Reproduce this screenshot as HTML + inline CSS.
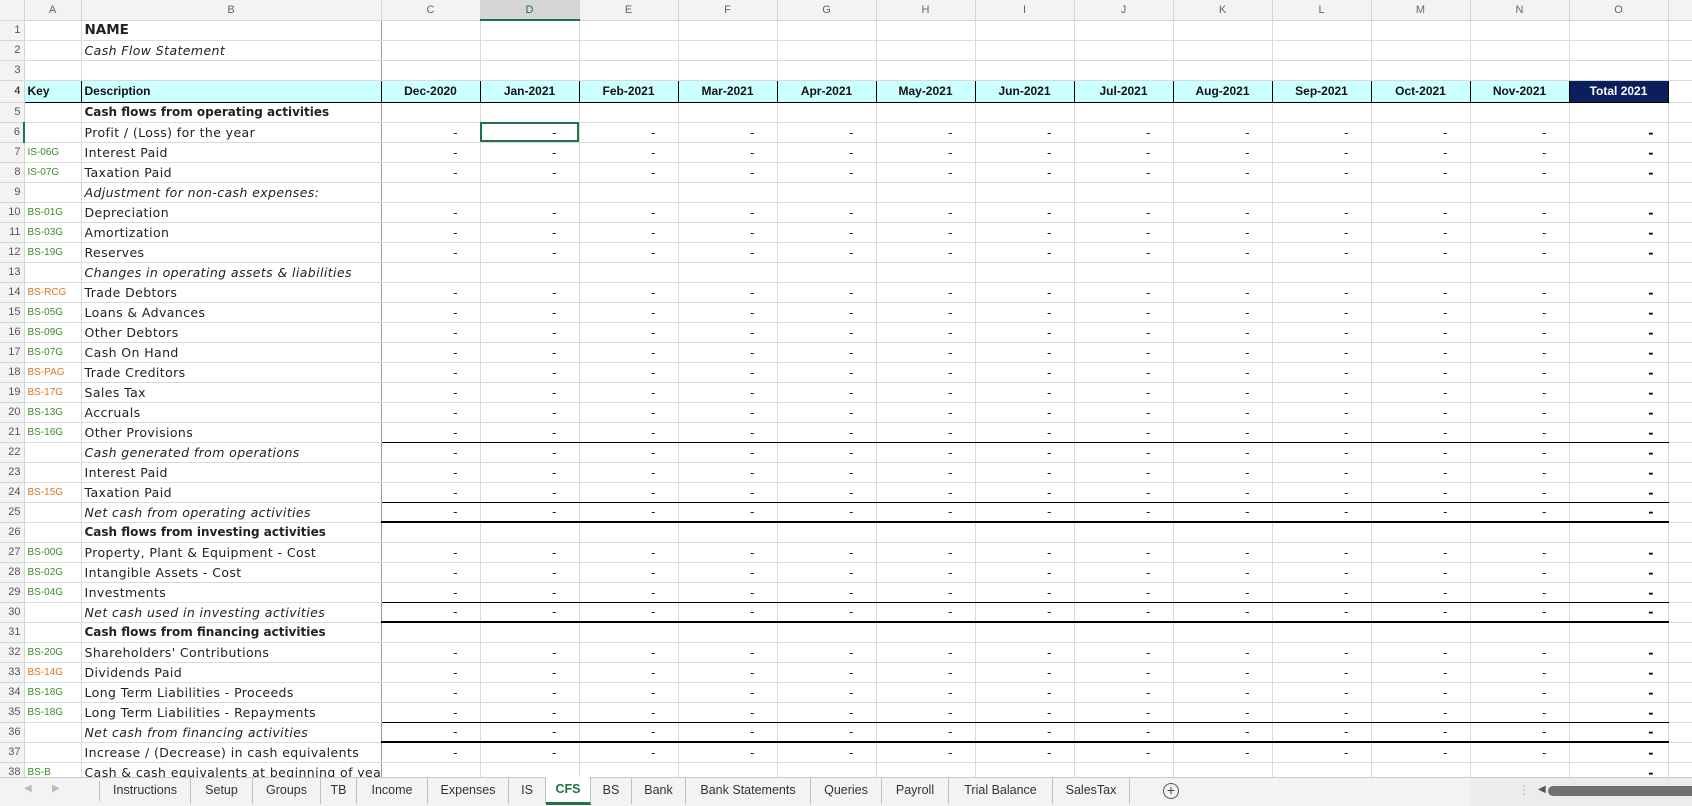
<!DOCTYPE html>
<html><head><meta charset="utf-8"><style>
*{margin:0;padding:0;box-sizing:border-box}
body{width:1692px;height:806px;overflow:hidden;background:#fff;font-family:"DejaVu Sans","Liberation Sans",sans-serif;font-size:12.5px;color:#222;position:relative}
table{border-collapse:collapse;table-layout:fixed;position:absolute;left:0;top:0;width:1698px}
td{height:20px;border-right:1px solid #dadada;border-bottom:1px solid #dadada;white-space:nowrap;overflow:hidden;padding:0 3px;vertical-align:middle}
tr.ch td{background:#f3f3f3;color:#666;text-align:center;font-size:11px;font-family:"Liberation Sans",sans-serif;border-color:#d4d4d4}
td.rn{background:#f3f3f3;color:#555;text-align:right;padding:0 3px 0 0;font-size:11px;border-color:#d4d4d4;font-family:"Liberation Sans",sans-serif}
td.fz{border-right:1px solid #9a9a9a;letter-spacing:0.4px}
td.fz.b{letter-spacing:0;font-size:12px}
tr.hd td{background:#ccffff;font-weight:bold;font-family:"Liberation Sans",sans-serif;font-size:12px;color:#111;border-top:1px solid #000;border-bottom:1px solid #000;border-right:1px solid #000;text-align:center;height:22px;letter-spacing:0}
tr.hd td.rn{background:#f3f3f3;border-top:1px solid #d4d4d4;border-bottom:1px solid #d4d4d4;border-right:1px solid #d4d4d4;font-weight:normal;text-align:right;font-size:11px}
tr.hd td.l{text-align:left}
tr.hd td.tot{background:#0b1f5c;color:#fff}
tr.hd td.p{background:#fff;border-top:1px solid #dadada;border-bottom:1px solid #dadada;border-right:1px solid #dadada}
td.k{font-size:10px;color:#3b8a2a;font-family:"Liberation Sans",sans-serif}
td.o{color:#e0741f}
.b{font-weight:bold}
.i{font-style:italic}
tr.d td.v{text-align:right;padding-right:22px}
tr.d td.t{text-align:right;padding-right:14px;font-weight:bold;color:#000}
tr.bt td.v,tr.bt td.t{border-bottom:1px solid #000}
tr.bk td.v,tr.bk td.t{border-bottom:2px solid #000}
td.sel{outline:2px solid #217346;outline-offset:-2px;position:relative}
.tabs{position:absolute;left:0;top:777px;width:1692px;height:29px;background:#f3f3f3;border-top:1px solid #c8c8c8;font-family:"Liberation Sans",sans-serif;font-size:12.5px;color:#333}
.tab{position:absolute;top:0;height:26px;line-height:24px;text-align:center;border-right:1px solid #c0c0c0}
.tab.act{background:#fff;color:#217346;font-weight:bold;border-bottom:3px solid #217346;top:-1px;height:28px}
</style></head><body>
<table>
<colgroup><col style="width:24px"><col style="width:57px"><col style="width:300px"><col style="width:99px"><col style="width:99px"><col style="width:99px"><col style="width:99px"><col style="width:99px"><col style="width:99px"><col style="width:99px"><col style="width:99px"><col style="width:99px"><col style="width:99px"><col style="width:99px"><col style="width:99px"><col style="width:99px"><col style="width:30px"></colgroup>
<tr class="ch"><td style="background:#f3f3f3"></td><td>A</td><td class="fz" style="letter-spacing:0">B</td><td>C</td><td style="background:#d6d6d6;color:#217346;border-bottom:2px solid #217346">D</td><td>E</td><td>F</td><td>G</td><td>H</td><td>I</td><td>J</td><td>K</td><td>L</td><td>M</td><td>N</td><td>O</td><td></td></tr>
<tr><td class="rn">1</td><td></td><td class="fz b" style="font-size:13.5px">NAME</td><td></td><td></td><td></td><td></td><td></td><td></td><td></td><td></td><td></td><td></td><td></td><td></td><td></td><td></td></tr>
<tr><td class="rn">2</td><td></td><td class="fz i">Cash Flow Statement</td><td></td><td></td><td></td><td></td><td></td><td></td><td></td><td></td><td></td><td></td><td></td><td></td><td></td><td></td></tr>
<tr><td class="rn">3</td><td></td><td class="fz"></td><td></td><td></td><td></td><td></td><td></td><td></td><td></td><td></td><td></td><td></td><td></td><td></td><td></td><td></td></tr>
<tr class="hd"><td class="rn">4</td><td class="l">Key</td><td class="l">Description</td><td>Dec-2020</td><td>Jan-2021</td><td>Feb-2021</td><td>Mar-2021</td><td>Apr-2021</td><td>May-2021</td><td>Jun-2021</td><td>Jul-2021</td><td>Aug-2021</td><td>Sep-2021</td><td>Oct-2021</td><td>Nov-2021</td><td class="tot">Total 2021</td><td class="p"></td></tr>
<tr><td class="rn">5</td><td></td><td class="fz b">Cash flows from operating activities</td><td></td><td></td><td></td><td></td><td></td><td></td><td></td><td></td><td></td><td></td><td></td><td></td><td></td><td></td></tr>
<tr class="d"><td class="rn" style="border-right:2px solid #217346">6</td><td class="k"></td><td class="fz">Profit / (Loss) for the year</td><td class="v">-</td><td class="v sel">-</td><td class="v">-</td><td class="v">-</td><td class="v">-</td><td class="v">-</td><td class="v">-</td><td class="v">-</td><td class="v">-</td><td class="v">-</td><td class="v">-</td><td class="v">-</td><td class="t">-</td><td></td></tr>
<tr class="d"><td class="rn">7</td><td class="k">IS-06G</td><td class="fz">Interest Paid</td><td class="v">-</td><td class="v">-</td><td class="v">-</td><td class="v">-</td><td class="v">-</td><td class="v">-</td><td class="v">-</td><td class="v">-</td><td class="v">-</td><td class="v">-</td><td class="v">-</td><td class="v">-</td><td class="t">-</td><td></td></tr>
<tr class="d"><td class="rn">8</td><td class="k">IS-07G</td><td class="fz">Taxation Paid</td><td class="v">-</td><td class="v">-</td><td class="v">-</td><td class="v">-</td><td class="v">-</td><td class="v">-</td><td class="v">-</td><td class="v">-</td><td class="v">-</td><td class="v">-</td><td class="v">-</td><td class="v">-</td><td class="t">-</td><td></td></tr>
<tr><td class="rn">9</td><td></td><td class="fz i">Adjustment for non-cash expenses:</td><td></td><td></td><td></td><td></td><td></td><td></td><td></td><td></td><td></td><td></td><td></td><td></td><td></td><td></td></tr>
<tr class="d"><td class="rn">10</td><td class="k">BS-01G</td><td class="fz">Depreciation</td><td class="v">-</td><td class="v">-</td><td class="v">-</td><td class="v">-</td><td class="v">-</td><td class="v">-</td><td class="v">-</td><td class="v">-</td><td class="v">-</td><td class="v">-</td><td class="v">-</td><td class="v">-</td><td class="t">-</td><td></td></tr>
<tr class="d"><td class="rn">11</td><td class="k">BS-03G</td><td class="fz">Amortization</td><td class="v">-</td><td class="v">-</td><td class="v">-</td><td class="v">-</td><td class="v">-</td><td class="v">-</td><td class="v">-</td><td class="v">-</td><td class="v">-</td><td class="v">-</td><td class="v">-</td><td class="v">-</td><td class="t">-</td><td></td></tr>
<tr class="d"><td class="rn">12</td><td class="k">BS-19G</td><td class="fz">Reserves</td><td class="v">-</td><td class="v">-</td><td class="v">-</td><td class="v">-</td><td class="v">-</td><td class="v">-</td><td class="v">-</td><td class="v">-</td><td class="v">-</td><td class="v">-</td><td class="v">-</td><td class="v">-</td><td class="t">-</td><td></td></tr>
<tr><td class="rn">13</td><td></td><td class="fz i">Changes in operating assets &amp; liabilities</td><td></td><td></td><td></td><td></td><td></td><td></td><td></td><td></td><td></td><td></td><td></td><td></td><td></td><td></td></tr>
<tr class="d"><td class="rn">14</td><td class="k o">BS-RCG</td><td class="fz">Trade Debtors</td><td class="v">-</td><td class="v">-</td><td class="v">-</td><td class="v">-</td><td class="v">-</td><td class="v">-</td><td class="v">-</td><td class="v">-</td><td class="v">-</td><td class="v">-</td><td class="v">-</td><td class="v">-</td><td class="t">-</td><td></td></tr>
<tr class="d"><td class="rn">15</td><td class="k">BS-05G</td><td class="fz">Loans &amp; Advances</td><td class="v">-</td><td class="v">-</td><td class="v">-</td><td class="v">-</td><td class="v">-</td><td class="v">-</td><td class="v">-</td><td class="v">-</td><td class="v">-</td><td class="v">-</td><td class="v">-</td><td class="v">-</td><td class="t">-</td><td></td></tr>
<tr class="d"><td class="rn">16</td><td class="k">BS-09G</td><td class="fz">Other Debtors</td><td class="v">-</td><td class="v">-</td><td class="v">-</td><td class="v">-</td><td class="v">-</td><td class="v">-</td><td class="v">-</td><td class="v">-</td><td class="v">-</td><td class="v">-</td><td class="v">-</td><td class="v">-</td><td class="t">-</td><td></td></tr>
<tr class="d"><td class="rn">17</td><td class="k">BS-07G</td><td class="fz">Cash On Hand</td><td class="v">-</td><td class="v">-</td><td class="v">-</td><td class="v">-</td><td class="v">-</td><td class="v">-</td><td class="v">-</td><td class="v">-</td><td class="v">-</td><td class="v">-</td><td class="v">-</td><td class="v">-</td><td class="t">-</td><td></td></tr>
<tr class="d"><td class="rn">18</td><td class="k o">BS-PAG</td><td class="fz">Trade Creditors</td><td class="v">-</td><td class="v">-</td><td class="v">-</td><td class="v">-</td><td class="v">-</td><td class="v">-</td><td class="v">-</td><td class="v">-</td><td class="v">-</td><td class="v">-</td><td class="v">-</td><td class="v">-</td><td class="t">-</td><td></td></tr>
<tr class="d"><td class="rn">19</td><td class="k o">BS-17G</td><td class="fz">Sales Tax</td><td class="v">-</td><td class="v">-</td><td class="v">-</td><td class="v">-</td><td class="v">-</td><td class="v">-</td><td class="v">-</td><td class="v">-</td><td class="v">-</td><td class="v">-</td><td class="v">-</td><td class="v">-</td><td class="t">-</td><td></td></tr>
<tr class="d"><td class="rn">20</td><td class="k">BS-13G</td><td class="fz">Accruals</td><td class="v">-</td><td class="v">-</td><td class="v">-</td><td class="v">-</td><td class="v">-</td><td class="v">-</td><td class="v">-</td><td class="v">-</td><td class="v">-</td><td class="v">-</td><td class="v">-</td><td class="v">-</td><td class="t">-</td><td></td></tr>
<tr class="d bt"><td class="rn">21</td><td class="k">BS-16G</td><td class="fz">Other Provisions</td><td class="v">-</td><td class="v">-</td><td class="v">-</td><td class="v">-</td><td class="v">-</td><td class="v">-</td><td class="v">-</td><td class="v">-</td><td class="v">-</td><td class="v">-</td><td class="v">-</td><td class="v">-</td><td class="t">-</td><td></td></tr>
<tr class="d"><td class="rn">22</td><td class="k"></td><td class="fz i">Cash generated from operations</td><td class="v">-</td><td class="v">-</td><td class="v">-</td><td class="v">-</td><td class="v">-</td><td class="v">-</td><td class="v">-</td><td class="v">-</td><td class="v">-</td><td class="v">-</td><td class="v">-</td><td class="v">-</td><td class="t">-</td><td></td></tr>
<tr class="d"><td class="rn">23</td><td class="k"></td><td class="fz">Interest Paid</td><td class="v">-</td><td class="v">-</td><td class="v">-</td><td class="v">-</td><td class="v">-</td><td class="v">-</td><td class="v">-</td><td class="v">-</td><td class="v">-</td><td class="v">-</td><td class="v">-</td><td class="v">-</td><td class="t">-</td><td></td></tr>
<tr class="d bt"><td class="rn">24</td><td class="k o">BS-15G</td><td class="fz">Taxation Paid</td><td class="v">-</td><td class="v">-</td><td class="v">-</td><td class="v">-</td><td class="v">-</td><td class="v">-</td><td class="v">-</td><td class="v">-</td><td class="v">-</td><td class="v">-</td><td class="v">-</td><td class="v">-</td><td class="t">-</td><td></td></tr>
<tr class="d bk"><td class="rn">25</td><td class="k"></td><td class="fz i">Net cash from operating activities</td><td class="v">-</td><td class="v">-</td><td class="v">-</td><td class="v">-</td><td class="v">-</td><td class="v">-</td><td class="v">-</td><td class="v">-</td><td class="v">-</td><td class="v">-</td><td class="v">-</td><td class="v">-</td><td class="t">-</td><td></td></tr>
<tr><td class="rn">26</td><td></td><td class="fz b">Cash flows from investing activities</td><td></td><td></td><td></td><td></td><td></td><td></td><td></td><td></td><td></td><td></td><td></td><td></td><td></td><td></td></tr>
<tr class="d"><td class="rn">27</td><td class="k">BS-00G</td><td class="fz">Property, Plant &amp; Equipment - Cost</td><td class="v">-</td><td class="v">-</td><td class="v">-</td><td class="v">-</td><td class="v">-</td><td class="v">-</td><td class="v">-</td><td class="v">-</td><td class="v">-</td><td class="v">-</td><td class="v">-</td><td class="v">-</td><td class="t">-</td><td></td></tr>
<tr class="d"><td class="rn">28</td><td class="k">BS-02G</td><td class="fz">Intangible Assets - Cost</td><td class="v">-</td><td class="v">-</td><td class="v">-</td><td class="v">-</td><td class="v">-</td><td class="v">-</td><td class="v">-</td><td class="v">-</td><td class="v">-</td><td class="v">-</td><td class="v">-</td><td class="v">-</td><td class="t">-</td><td></td></tr>
<tr class="d bt"><td class="rn">29</td><td class="k">BS-04G</td><td class="fz">Investments</td><td class="v">-</td><td class="v">-</td><td class="v">-</td><td class="v">-</td><td class="v">-</td><td class="v">-</td><td class="v">-</td><td class="v">-</td><td class="v">-</td><td class="v">-</td><td class="v">-</td><td class="v">-</td><td class="t">-</td><td></td></tr>
<tr class="d bk"><td class="rn">30</td><td class="k"></td><td class="fz i">Net cash used in investing activities</td><td class="v">-</td><td class="v">-</td><td class="v">-</td><td class="v">-</td><td class="v">-</td><td class="v">-</td><td class="v">-</td><td class="v">-</td><td class="v">-</td><td class="v">-</td><td class="v">-</td><td class="v">-</td><td class="t">-</td><td></td></tr>
<tr><td class="rn">31</td><td></td><td class="fz b">Cash flows from financing activities</td><td></td><td></td><td></td><td></td><td></td><td></td><td></td><td></td><td></td><td></td><td></td><td></td><td></td><td></td></tr>
<tr class="d"><td class="rn">32</td><td class="k">BS-20G</td><td class="fz">Shareholders' Contributions</td><td class="v">-</td><td class="v">-</td><td class="v">-</td><td class="v">-</td><td class="v">-</td><td class="v">-</td><td class="v">-</td><td class="v">-</td><td class="v">-</td><td class="v">-</td><td class="v">-</td><td class="v">-</td><td class="t">-</td><td></td></tr>
<tr class="d"><td class="rn">33</td><td class="k o">BS-14G</td><td class="fz">Dividends Paid</td><td class="v">-</td><td class="v">-</td><td class="v">-</td><td class="v">-</td><td class="v">-</td><td class="v">-</td><td class="v">-</td><td class="v">-</td><td class="v">-</td><td class="v">-</td><td class="v">-</td><td class="v">-</td><td class="t">-</td><td></td></tr>
<tr class="d"><td class="rn">34</td><td class="k">BS-18G</td><td class="fz">Long Term Liabilities - Proceeds</td><td class="v">-</td><td class="v">-</td><td class="v">-</td><td class="v">-</td><td class="v">-</td><td class="v">-</td><td class="v">-</td><td class="v">-</td><td class="v">-</td><td class="v">-</td><td class="v">-</td><td class="v">-</td><td class="t">-</td><td></td></tr>
<tr class="d bt"><td class="rn">35</td><td class="k">BS-18G</td><td class="fz">Long Term Liabilities - Repayments</td><td class="v">-</td><td class="v">-</td><td class="v">-</td><td class="v">-</td><td class="v">-</td><td class="v">-</td><td class="v">-</td><td class="v">-</td><td class="v">-</td><td class="v">-</td><td class="v">-</td><td class="v">-</td><td class="t">-</td><td></td></tr>
<tr class="d bk"><td class="rn">36</td><td class="k"></td><td class="fz i">Net cash from financing activities</td><td class="v">-</td><td class="v">-</td><td class="v">-</td><td class="v">-</td><td class="v">-</td><td class="v">-</td><td class="v">-</td><td class="v">-</td><td class="v">-</td><td class="v">-</td><td class="v">-</td><td class="v">-</td><td class="t">-</td><td></td></tr>
<tr class="d"><td class="rn">37</td><td class="k"></td><td class="fz">Increase / (Decrease) in cash equivalents</td><td class="v">-</td><td class="v">-</td><td class="v">-</td><td class="v">-</td><td class="v">-</td><td class="v">-</td><td class="v">-</td><td class="v">-</td><td class="v">-</td><td class="v">-</td><td class="v">-</td><td class="v">-</td><td class="t">-</td><td></td></tr>
<tr class="d"><td class="rn">38</td><td class="k">BS-B</td><td class="fz">Cash &amp; cash equivalents at beginning of year</td><td class="v"></td><td class="v"></td><td class="v"></td><td class="v"></td><td class="v"></td><td class="v"></td><td class="v"></td><td class="v"></td><td class="v"></td><td class="v"></td><td class="v"></td><td class="v"></td><td class="t">-</td><td></td></tr>
</table>
<div class="tabs">
<span style="position:absolute;left:24px;top:5px;color:#bbb;font-size:10px">&#9664;</span>
<span style="position:absolute;left:52px;top:5px;color:#bbb;font-size:10px">&#9654;</span>
<div style="position:absolute;left:99px;top:3px;height:20px;border-left:1px solid #c0c0c0"></div>
<div class="tab" style="left:100px;width:91px">Instructions</div>
<div class="tab" style="left:191px;width:62px">Setup</div>
<div class="tab" style="left:253px;width:68px">Groups</div>
<div class="tab" style="left:321px;width:36px">TB</div>
<div class="tab" style="left:357px;width:71px">Income</div>
<div class="tab" style="left:428px;width:81px">Expenses</div>
<div class="tab" style="left:509px;width:37px">IS</div>
<div class="tab act" style="left:546px;width:45px">CFS</div>
<div class="tab" style="left:591px;width:41px">BS</div>
<div class="tab" style="left:632px;width:54px">Bank</div>
<div class="tab" style="left:686px;width:125px">Bank Statements</div>
<div class="tab" style="left:811px;width:71px">Queries</div>
<div class="tab" style="left:882px;width:67px">Payroll</div>
<div class="tab" style="left:949px;width:104px">Trial Balance</div>
<div class="tab" style="left:1053px;width:77px">SalesTax</div>
<div style="position:absolute;left:1163px;top:5px;width:16px;height:16px;border:1px solid #555;border-radius:50%;text-align:center;line-height:13px;font-size:14px;color:#444">+</div>
<div style="position:absolute;left:1470px;top:0;width:222px;height:28px;background:#ececec"></div>
<span style="position:absolute;left:1518px;top:5px;color:#aaa;font-size:12px">&#8942;</span>
<span style="position:absolute;left:1538px;top:6px;color:#555;font-size:10px">&#9664;</span>
<div style="position:absolute;left:1548px;top:8px;width:150px;height:10px;background:#707070;border-radius:5px"></div>
</div>
</body></html>
